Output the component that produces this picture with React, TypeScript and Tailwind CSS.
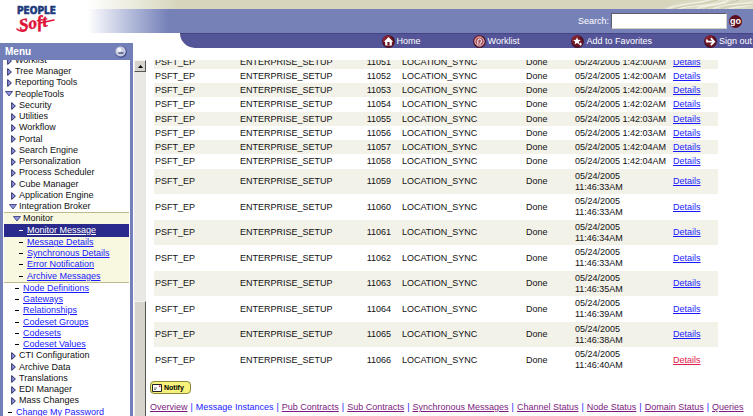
import React from "react";

type Kind = "closed" | "open" | "link";
type Item = { label: string; kind: Kind; level: number };

const topItems: Item[] = [
  { label: "Worklist", kind: "closed", level: 0 },
  { label: "Tree Manager", kind: "closed", level: 0 },
  { label: "Reporting Tools", kind: "closed", level: 0 },
  { label: "PeopleTools", kind: "open", level: 0 },
  { label: "Security", kind: "closed", level: 1 },
  { label: "Utilities", kind: "closed", level: 1 },
  { label: "Workflow", kind: "closed", level: 1 },
  { label: "Portal", kind: "closed", level: 1 },
  { label: "Search Engine", kind: "closed", level: 1 },
  { label: "Personalization", kind: "closed", level: 1 },
  { label: "Process Scheduler", kind: "closed", level: 1 },
  { label: "Cube Manager", kind: "closed", level: 1 },
  { label: "Application Engine", kind: "closed", level: 1 },
  { label: "Integration Broker", kind: "open", level: 1 },
];

const monitorItems: Item[] = [
  { label: "Message Details", kind: "link", level: 3 },
  { label: "Synchronous Details", kind: "link", level: 3 },
  { label: "Error Notification", kind: "link", level: 3 },
  { label: "Archive Messages", kind: "link", level: 3 },
];

const bottomItems: Item[] = [
  { label: "Node Definitions", kind: "link", level: 2 },
  { label: "Gateways", kind: "link", level: 2 },
  { label: "Relationships", kind: "link", level: 2 },
  { label: "Codeset Groups", kind: "link", level: 2 },
  { label: "Codesets", kind: "link", level: 2 },
  { label: "Codeset Values", kind: "link", level: 2 },
  { label: "CTI Configuration", kind: "closed", level: 1 },
  { label: "Archive Data", kind: "closed", level: 1 },
  { label: "Translations", kind: "closed", level: 1 },
  { label: "EDI Manager", kind: "closed", level: 1 },
  { label: "Mass Changes", kind: "closed", level: 1 },
  { label: "Change My Password", kind: "link", level: 0 },
];

const shortRows: [string, string][] = [
  ["11051", "1:42:00AM"],
  ["11052", "1:42:00AM"],
  ["11053", "1:42:00AM"],
  ["11054", "1:42:02AM"],
  ["11055", "1:42:03AM"],
  ["11056", "1:42:03AM"],
  ["11057", "1:42:04AM"],
  ["11058", "1:42:04AM"],
];

const tallRows: [string, string][] = [
  ["11059", "11:46:33AM"],
  ["11060", "11:46:33AM"],
  ["11061", "11:46:34AM"],
  ["11062", "11:46:33AM"],
  ["11063", "11:46:35AM"],
  ["11064", "11:46:39AM"],
  ["11065", "11:46:38AM"],
  ["11066", "11:46:40AM"],
];

const pageLinks = [
  "Overview",
  "Message Instances",
  "Pub Contracts",
  "Sub Contracts",
  "Synchronous Messages",
  "Channel Status",
  "Node Status",
  "Domain Status",
  "Queries",
];

const folderIndent = ["pl-px", "pl-[5px]"];
const linkIndent = ["pl-1", "pl-2", "pl-[11px]", "pl-[15px]"];

function Marker({ kind }: { kind: Kind }) {
  if (kind === "link") return <span className="mr-1 h-px w-1 shrink-0 bg-black" />;
  if (kind === "open")
    return (
      <svg className="mr-0.5 h-2 w-2 shrink-0" viewBox="0 0 8 8">
        <path d="M0.5 1.5h7L4 6z" fill="#9297dc" stroke="#3c3f85" strokeWidth="0.9" />
      </svg>
    );
  return (
    <svg className="ml-0.5 mr-[3px] h-2 w-[5px] shrink-0" viewBox="0 0 5 8">
      <path d="M0.7 0.6v6.8L4.400 4z" fill="#8f95de" stroke="#26295f" strokeWidth="1" />
    </svg>
  );
}

function MenuRow({ item }: { item: Item }) {
  const isLink = item.kind === "link";
  return (
    <li
      className={`flex h-[11px] items-center whitespace-nowrap leading-[11px] nth-[4n]:h-3 ${
        isLink ? linkIndent[item.level] : folderIndent[item.level]
      }`}
    >
      <Marker kind={item.kind} />
      {isLink ? (
        <a href="#" className={`text-[#1a1aff] ${item.level === 0 ? "" : "underline"}`}>
          {item.label}
        </a>
      ) : (
        <span>{item.label}</span>
      )}
    </li>
  );
}

function Logo() {
  return (
    <svg className="ml-4 h-[33px] w-[42px] shrink-0" viewBox="0 0 42 33" role="img" aria-label="PeopleSoft">
      <text
        x="1"
        y="14"
        fontFamily="'Liberation Sans Narrow','DejaVu Sans Condensed',sans-serif"
        fontWeight="700"
        fontSize="10"
        fill="#1d3a7c"
        stroke="#1d3a7c"
        strokeWidth="0.6"
      >
        PEOPLE
      </text>
      <text
        x="4"
        y="31"
        transform="rotate(-10 4 31)"
        fontFamily="'Liberation Serif',serif"
        fontStyle="italic"
        fontWeight="700"
        fontSize="17"
        fill="#e01238"
        stroke="#e01238"
        strokeWidth="0.5"
      >
        Soft
      </text>
      <path d="M1 29c2 2 6 3 9 1M24 23l14-3" fill="none" stroke="#e01238" strokeWidth="1.6" strokeLinecap="round" />
    </svg>
  );
}

function Badge({ children }: { children: React.ReactNode }) {
  return (
    <svg className="h-[13px] w-[13px] shrink-0" viewBox="0 0 13 13">
      <circle cx="6.5" cy="6.5" r="6.3" fill="#3d0a16" />
      <circle cx="5.8" cy="5.6" r="5" fill="#8e2331" />
      <circle cx="7" cy="7.2" r="4.9" fill="#6b1524" />
      {children}
    </svg>
  );
}

const navItems = [
  {
    label: "Home",
    icon: (
      <>
        <path d="M6.5 2L1.8 6.8h1.4v3.6h6.6V6.8h1.4z" fill="#fff" />
        <path d="M5.4 7h2.2v3.4H5.4z" fill="#6b1524" />
      </>
    ),
  },
  {
    label: "Worklist",
    icon: (
      <>
        <circle cx="6.5" cy="6.5" r="4.6" fill="#a8505c" stroke="#ecd0d4" strokeWidth="1" />
        <path d="M4.8 9.600V5.800a1.800 1.800 0 013.600 0v1.600L7 8.200v1.600" fill="none" stroke="#fff" strokeWidth="1" />
      </>
    ),
  },
  {
    label: "Add to Favorites",
    icon: (
      <>
        <path d="M6 2.200l1.100 2.600 2.800.2-2.100 1.800.7 2.700L6 8 3.600 9.500l.6-2.700L2.100 5l2.800-.2z" fill="#fff" />
        <path d="M9.500 7.600v3M8 9.100h3" stroke="#fff" strokeWidth="1" />
      </>
    ),
  },
  {
    label: "Sign out",
    icon: (
      <path d="M3 4.500v2.200h6.500M6.800 3.200l3.400 3.500-3.400 3.500" fill="none" stroke="#fff" strokeWidth="1.800" />
    ),
  },
];

const cell = "p-0 align-middle";

function DataRow({ id, time, tall, visited }: { id: string; time: string; tall: boolean; visited: boolean }) {
  return (
    <tr className={`odd:bg-[#f3f2e9] ${tall ? "h-[25px] even:h-[26px]" : "h-[14px] nth-[4n]:h-[15px]"}`}>
      <td className={`${cell} pl-px`}>PSFT_EP</td>
      <td className={cell}>ENTERPRISE_SETUP</td>
      <td className={`${cell} pr-[11px] text-right`}>{id}</td>
      <td className={cell}>LOCATION_SYNC</td>
      <td className={cell}>Done</td>
      <td className={cell}>
        05/24/2005{tall ? <br /> : " "}
        {time}
      </td>
      <td className={cell}>
        <a href="#" className={`underline ${visited ? "text-[#e0204a]" : "text-[#1a1aff]"}`}>
          Details
        </a>
      </td>
    </tr>
  );
}

export default function App() {
  return (
    <div className="flex h-screen flex-col overflow-hidden bg-white font-['Liberation_Sans',Arial,sans-serif] text-[9px] leading-[11px] text-[#111]">
      <header className="flex h-[33px] shrink-0">
        <Logo />
        <div className="ml-[30px] flex min-w-0 flex-1 flex-col">
          <div className="flex h-[9px] justify-end bg-linear-to-r from-white to-[#d7d6bc] to-[90px]">
            <svg className="h-[9px] w-[90px]" viewBox="0 0 90 9">
              <path d="M0 9C10 3 24 0 44 0h46v9z" fill="#dddcc6" />
              <path
                d="M4 9C18 3 30 5 46 0M16 9C30 3 50 8 66 0M34 9c6-5 20-2 30-6M50 9C60 2 76 6 90 2M66 9c8-3 16-2 24-5"
                fill="none"
                stroke="#f0efe2"
                strokeWidth="1.4"
              />
              <path d="M10 9C24 4 36 6 54 0M42 9c8-4 20-3 34-9M58 9c10-5 20-3 32-5" fill="none" stroke="#c6c5a8" strokeWidth="0.8" />
            </svg>
          </div>
          <form
            className="flex h-6 items-center justify-end bg-linear-to-r from-white to-[#7681b8] to-[80px] pr-[11px]"
            onSubmit={(e) => e.preventDefault()}
          >
            <label htmlFor="search" className="mr-0.5 text-white">
              Search:
            </label>
            <input
              id="search"
              type="text"
              className="h-4 w-[116px] border border-[#d4d0c8] border-l-[#5b5b6b] border-t-[#5b5b6b] bg-white px-1 outline-none"
            />
            <button
              type="submit"
              className="ml-0.5 flex h-[13px] w-[13px] items-center justify-center rounded-full bg-[#5c0f1e] font-bold text-white"
            >
              go
            </button>
          </form>
        </div>
      </header>

      <div className="flex min-h-0 flex-1">
        <aside className="flex w-[147px] shrink-0 flex-col pt-[10px]">
          <div className="flex h-[17px] w-[133px] shrink-0 items-center justify-between bg-[#737fb8] pl-[5px] pr-1.5">
            <h2 className="text-[10px] font-bold text-white">Menu</h2>
            <button type="button" aria-label="Minimize menu" className="h-3 w-3">
              <svg className="h-3 w-3" viewBox="0 0 12 12">
                <circle cx="6" cy="6" r="5.8" fill="#3d4580" />
                <circle cx="5.5" cy="5.4" r="5.2" fill="#c9cde4" />
                <circle cx="4.3" cy="4" r="2.2" fill="#f2f3fa" />
                <path d="M3.5 7h5" stroke="#2d3466" strokeWidth="1.2" />
              </svg>
            </button>
          </div>
          <div className="flex min-h-0 flex-1">
            <nav className="w-[133px] overflow-hidden border-x-[3px] border-[#737fb8] px-px" aria-label="Menu">
              <ul className="-mt-[5px]">
                {topItems.map((i) => (
                  <MenuRow key={i.label} item={i} />
                ))}
              </ul>
              <div className="border-y border-[#bdb98a] bg-[#f8f7e0]">
                <div className="flex h-[11px] items-center pl-[9px]">
                  <Marker kind="open" />
                  <span>Monitor</span>
                </div>
                <div className="flex h-[13px] items-center bg-[#2a2a8c] pl-[15px]">
                  <span className="mr-1 h-px w-1 bg-white" />
                  <a href="#" className="text-white underline">
                    Monitor Message
                  </a>
                </div>
                <ul>
                  {monitorItems.map((i) => (
                    <MenuRow key={i.label} item={i} />
                  ))}
                </ul>
              </div>
              <ul>
                {bottomItems.map((i) => (
                  <MenuRow key={i.label} item={i} />
                ))}
              </ul>
            </nav>
            <div className="ml-px flex w-3 flex-col bg-[#e9e8e4]">
              <button
                type="button"
                aria-label="Scroll up"
                className="flex h-3 items-center justify-center border border-[#f4f3ef] border-b-[#555] border-r-[#555] bg-[#d6d3cb]"
              >
                <svg className="h-[3px] w-[5px]" viewBox="0 0 5 3">
                  <path d="M2.5 0L5 3H0z" fill="#000" />
                </svg>
              </button>
              <div className="mt-[229px] flex-1 border-l border-r border-t border-[#f4f3ef] border-r-[#555] bg-[#d6d3cb]" />
            </div>
          </div>
        </aside>

        <div className="flex min-w-0 flex-1 flex-col">
          <nav
            aria-label="Main"
            className="ml-[33px] flex h-[15px] shrink-0 items-center justify-end gap-[52px] rounded-bl-2xl border-t border-[#454584] bg-[#545498] pr-px"
          >
            {navItems.map((n) => (
              <a key={n.label} href="#" className="flex items-center gap-0.5 whitespace-nowrap text-white">
                <Badge>{n.icon}</Badge>
                {n.label}
              </a>
            ))}
          </nav>

          <main className="mt-3 min-h-0 flex-1 overflow-hidden pl-[3px]">
            <div className="-mt-[5px] pl-1 pr-[35px]">
              <table className="w-full table-fixed border-collapse text-left">
                <colgroup>
                  <col className="w-[86px]" />
                  <col className="w-[110px]" />
                  <col className="w-[52px]" />
                  <col className="w-[124px]" />
                  <col className="w-[49px]" />
                  <col className="w-[98px]" />
                  <col />
                </colgroup>
                <tbody>
                  {shortRows.map(([id, time]) => (
                    <DataRow key={id} id={id} time={time} tall={false} visited={false} />
                  ))}
                </tbody>
                <tbody>
                  {tallRows.map(([id, time]) => (
                    <DataRow key={id} id={id} time={time} tall visited={id === "11066"} />
                  ))}
                </tbody>
              </table>
            </div>
            <button
              type="button"
              className="mt-2 flex h-[13px] w-[41px] items-center gap-0.5 rounded border border-[#8a8838] bg-[#f6f27c] pl-px text-[7px] font-bold leading-[11px] text-black"
            >
              <svg className="h-2 w-[10px] shrink-0" viewBox="0 0 10 8">
                <path d="M0.5 0.5h9v7h-9z" fill="#fff" stroke="#222" />
                <path d="M2 4h3M2 5.5h2" stroke="#555" strokeWidth="0.8" />
                <path d="M7 1.5h1.500V3H7z" fill="#d0103a" />
              </svg>
              Notify
            </button>
            <div className="mt-2 flex gap-[3px] whitespace-nowrap text-[#1a1aff]">
              {pageLinks.map((l, i) => (
                <React.Fragment key={l}>
                  {i > 0 && <span>|</span>}
                  {l === "Message Instances" ? (
                    <span>{l}</span>
                  ) : (
                    <a href="#" className="text-[#7d1a80] underline">
                      {l}
                    </a>
                  )}
                </React.Fragment>
              ))}
            </div>
          </main>
        </div>
      </div>
    </div>
  );
}
